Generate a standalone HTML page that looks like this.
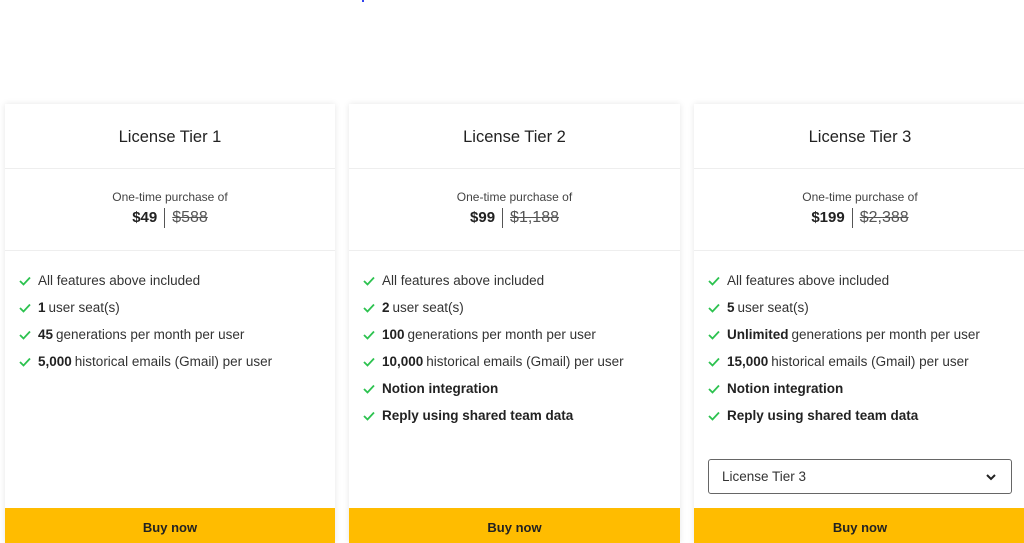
<!DOCTYPE html>
<html><head><meta charset="utf-8"><style>
*{box-sizing:border-box;margin:0;padding:0}
body{width:1024px;height:543px;overflow:hidden;background:#fff;font-family:"Liberation Sans",sans-serif;color:#222;position:relative}
.dot{position:absolute;left:362px;top:0;width:2px;height:2px;background:#3344ee}
.card{position:absolute;top:104px;height:439px;background:#fff;box-shadow:0 0 6px rgba(0,0,0,0.10);}
.hd{height:65px;border-bottom:1px solid #eee;display:flex;align-items:center;justify-content:center;font-size:16.5px;color:#222;padding-top:3px}
.pr{height:82px;border-bottom:1px solid #eee;text-align:center;padding-top:21px}
.pr .s{font-size:12px;color:#444}
.pr .p{margin-top:4px;font-size:15px;display:flex;justify-content:center;align-items:center}
.pr b{font-weight:700;color:#222;padding-right:7px;border-right:1px solid #555;line-height:20px}
.pr del{color:#555;padding-left:7px;font-size:16px}
ul{list-style:none;padding:16px 0 0 14px}
li{height:27px;font-size:13.5px;color:#333;display:flex;align-items:center}
li svg{margin-right:7px}
li b{font-weight:700;color:#222;margin-right:3px}
.btn{position:absolute;left:0;right:0;bottom:0;height:35px;background:#FFBC00;display:flex;align-items:center;justify-content:center;font-size:13px;font-weight:700;color:#222;padding-top:3px}
.sel{position:absolute;left:14px;top:355px;width:304px;height:35px;border:1px solid #666;border-radius:3px;font-size:13.5px;color:#333;padding:0 0 0 13px;display:flex;align-items:center;justify-content:space-between}
.sel svg{margin-right:14px}
</style></head><body>
<div class="dot"></div>

<div class="card" style="left:5px;width:330px">
<div class="hd">License Tier 1</div>
<div class="pr"><div class="s">One-time purchase of</div><div class="p"><b>$49</b><del>$588</del></div></div>
<ul>
<li><svg width="12" height="10" viewBox="0 0 12 10"><path d="M1 5l3.5 3.5L11 1.5" fill="none" stroke="#2cc24f" stroke-width="1.8"/></svg>All features above included</li>
<li><svg width="12" height="10" viewBox="0 0 12 10"><path d="M1 5l3.5 3.5L11 1.5" fill="none" stroke="#2cc24f" stroke-width="1.8"/></svg><b>1</b>user seat(s)</li>
<li><svg width="12" height="10" viewBox="0 0 12 10"><path d="M1 5l3.5 3.5L11 1.5" fill="none" stroke="#2cc24f" stroke-width="1.8"/></svg><b>45</b>generations per month per user</li>
<li><svg width="12" height="10" viewBox="0 0 12 10"><path d="M1 5l3.5 3.5L11 1.5" fill="none" stroke="#2cc24f" stroke-width="1.8"/></svg><b>5,000</b>historical emails (Gmail) per user</li>
</ul>
<div class="btn">Buy now</div>
</div>

<div class="card" style="left:349px;width:331px">
<div class="hd">License Tier 2</div>
<div class="pr"><div class="s">One-time purchase of</div><div class="p"><b>$99</b><del>$1,188</del></div></div>
<ul>
<li><svg width="12" height="10" viewBox="0 0 12 10"><path d="M1 5l3.5 3.5L11 1.5" fill="none" stroke="#2cc24f" stroke-width="1.8"/></svg>All features above included</li>
<li><svg width="12" height="10" viewBox="0 0 12 10"><path d="M1 5l3.5 3.5L11 1.5" fill="none" stroke="#2cc24f" stroke-width="1.8"/></svg><b>2</b>user seat(s)</li>
<li><svg width="12" height="10" viewBox="0 0 12 10"><path d="M1 5l3.5 3.5L11 1.5" fill="none" stroke="#2cc24f" stroke-width="1.8"/></svg><b>100</b>generations per month per user</li>
<li><svg width="12" height="10" viewBox="0 0 12 10"><path d="M1 5l3.5 3.5L11 1.5" fill="none" stroke="#2cc24f" stroke-width="1.8"/></svg><b>10,000</b>historical emails (Gmail) per user</li>
<li><svg width="12" height="10" viewBox="0 0 12 10"><path d="M1 5l3.5 3.5L11 1.5" fill="none" stroke="#2cc24f" stroke-width="1.8"/></svg><b>Notion integration</b></li>
<li><svg width="12" height="10" viewBox="0 0 12 10"><path d="M1 5l3.5 3.5L11 1.5" fill="none" stroke="#2cc24f" stroke-width="1.8"/></svg><b>Reply using shared team data</b></li>
</ul>
<div class="btn">Buy now</div>
</div>

<div class="card" style="left:694px;width:332px">
<div class="hd">License Tier 3</div>
<div class="pr"><div class="s">One-time purchase of</div><div class="p"><b>$199</b><del>$2,388</del></div></div>
<ul>
<li><svg width="12" height="10" viewBox="0 0 12 10"><path d="M1 5l3.5 3.5L11 1.5" fill="none" stroke="#2cc24f" stroke-width="1.8"/></svg>All features above included</li>
<li><svg width="12" height="10" viewBox="0 0 12 10"><path d="M1 5l3.5 3.5L11 1.5" fill="none" stroke="#2cc24f" stroke-width="1.8"/></svg><b>5</b>user seat(s)</li>
<li><svg width="12" height="10" viewBox="0 0 12 10"><path d="M1 5l3.5 3.5L11 1.5" fill="none" stroke="#2cc24f" stroke-width="1.8"/></svg><b>Unlimited</b>generations per month per user</li>
<li><svg width="12" height="10" viewBox="0 0 12 10"><path d="M1 5l3.5 3.5L11 1.5" fill="none" stroke="#2cc24f" stroke-width="1.8"/></svg><b>15,000</b>historical emails (Gmail) per user</li>
<li><svg width="12" height="10" viewBox="0 0 12 10"><path d="M1 5l3.5 3.5L11 1.5" fill="none" stroke="#2cc24f" stroke-width="1.8"/></svg><b>Notion integration</b></li>
<li><svg width="12" height="10" viewBox="0 0 12 10"><path d="M1 5l3.5 3.5L11 1.5" fill="none" stroke="#2cc24f" stroke-width="1.8"/></svg><b>Reply using shared team data</b></li>
</ul>
<div class="sel">License Tier 3<svg width="12" height="8" viewBox="0 0 12 8"><path d="M2 2l4 4 4-4" fill="none" stroke="#222" stroke-width="2"/></svg></div>
<div class="btn">Buy now</div>
</div>
</body></html>
